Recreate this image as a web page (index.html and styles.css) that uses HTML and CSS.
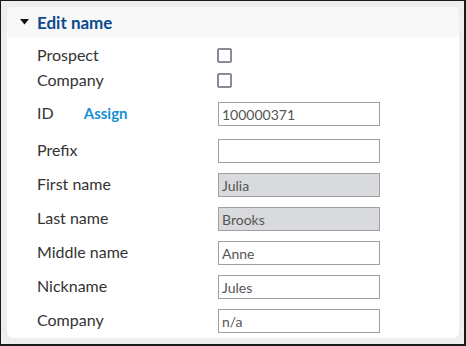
FILE: index.html
```html
<!DOCTYPE html>
<html lang="en">
  <head>
    <meta charset="UTF-8" />
    <title>Edit name</title>
    <link rel="stylesheet" href="styles.css">
  </head>
  <body>
    <div class="frame">
      <div class="panel">
        <div class="panel-header">
          <svg class="caret" width="9" height="6" viewBox="0 0 9 6">
            <polygon points="0,0 9,0 4.5,5.5" fill="#111" />
          </svg>
          <span class="panel-title">Edit name</span>
        </div>

        <div class="panel-body">
          <div class="row check-row">
            <label>Prospect</label>
            <span class="checkbox"></span>
          </div>
          <div class="row check-row">
            <label>Company</label>
            <span class="checkbox"></span>
          </div>
          <div class="row id-row">
            <label>ID <a class="assign" href="#">Assign</a></label>
            <input type="text" value="100000371" />
          </div>
          <div class="row prefix-row">
            <label>Prefix</label>
            <input type="text" value="" />
          </div>
          <div class="row">
            <label>First name</label>
            <input type="text" value="Julia" disabled />
          </div>
          <div class="row">
            <label>Last name</label>
            <input type="text" value="Brooks" disabled />
          </div>
          <div class="row">
            <label>Middle name</label>
            <input type="text" value="Anne" />
          </div>
          <div class="row">
            <label>Nickname</label>
            <input type="text" value="Jules" />
          </div>
          <div class="row">
            <label>Company</label>
            <input type="text" value="n/a" />
          </div>
        </div>
      </div>
    </div>
  </body>
</html>
```

FILE: styles.css
```css
body {
  margin: 0;
  padding: 0;
  font-family: "Lato", "Liberation Sans", sans-serif;
}

.frame {
  width: 466px;
  height: 346px;
  box-sizing: border-box;
  border: 1px solid #1a1a1a;
  border-right-width: 2px;
  border-bottom-width: 2px;
  background-color: #eeeeee;
  padding: 6px 5px 5px 6px;
}

.panel {
  background-color: #ffffff;
  border-radius: 6px;
  height: 331px;
}

.panel-header {
  height: 31px;
  background-color: #f8f8f8;
  border-radius: 6px;
  display: flex;
  align-items: center;
  padding-left: 13px;
}

.caret {
  margin-right: 8px;
  margin-top: -2px;
}

.panel-title {
  font-size: 17px;
  font-weight: bold;
  color: #0b4a8e;
}

.panel-body {
  padding: 5px 0 5px 30px;
  display: flex;
  flex-direction: column;
  gap: 10px;
}

.row {
  display: grid;
  grid-template-columns: 181px 162px;
  align-items: center;
  height: 24px;
}

.row label {
  font-size: 16px;
  line-height: 20px;
  margin-top: -2px;
  color: #333333;
}

.check-row {
  height: 25px;
  margin-bottom: -10px;
}

.check-row + .id-row {
  margin-top: 9px;
}

.id-row + .prefix-row {
  margin-top: 3px;
}

.checkbox {
  display: block;
  width: 11px;
  height: 11px;
  margin-left: -1px;
  border: 2px solid #8a8997;
  border-radius: 2px;
  background-color: #ffffff;
}

.assign {
  margin-left: 26px;
  font-size: 15px;
  font-weight: bold;
  color: #168fd6;
  text-decoration: none;
}

input {
  width: 162px;
  height: 24px;
  box-sizing: border-box;
  border: 1px solid #a0a0a0;
  padding: 0 3px;
  font-family: "Lato", sans-serif;
  font-size: 14px;
  color: #555555;
  background-color: #ffffff;
  outline: none;
}

input:disabled {
  background-color: #d8dadd;
  color: #555555;
}
```
